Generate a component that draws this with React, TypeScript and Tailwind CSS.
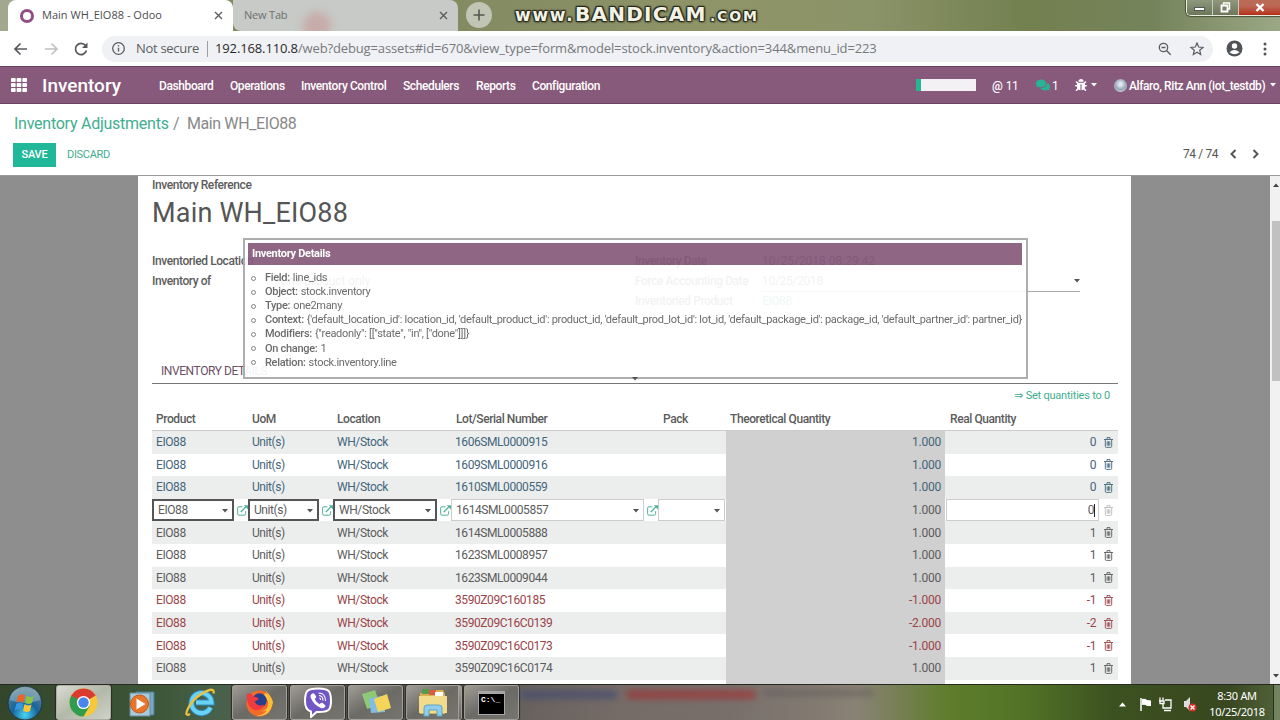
import type { ReactNode } from "react";
import clsx from "clsx";
import { FaBug, FaComments, FaTh } from "react-icons/fa";

type Line = {
  lot: string;
  theoretical: string;
  real: string;
  tone: "info" | "normal" | "danger";
  editing?: boolean;
};

const LINES: Line[] = [
  { lot: "1606SML0000915", theoretical: "1.000", real: "0", tone: "info" },
  { lot: "1609SML0000916", theoretical: "1.000", real: "0", tone: "info" },
  { lot: "1610SML0000559", theoretical: "1.000", real: "0", tone: "info" },
  { lot: "1614SML0005857", theoretical: "1.000", real: "0", tone: "normal", editing: true },
  { lot: "1614SML0005888", theoretical: "1.000", real: "1", tone: "normal" },
  { lot: "1623SML0008957", theoretical: "1.000", real: "1", tone: "normal" },
  { lot: "1623SML0009044", theoretical: "1.000", real: "1", tone: "normal" },
  { lot: "3590Z09C160185", theoretical: "-1.000", real: "-1", tone: "danger" },
  { lot: "3590Z09C16C0139", theoretical: "-2.000", real: "-2", tone: "danger" },
  { lot: "3590Z09C16C0173", theoretical: "-1.000", real: "-1", tone: "danger" },
  { lot: "3590Z09C16C0174", theoretical: "1.000", real: "1", tone: "normal" },
];

const DETAILS = [
  ["Field:", "line_ids"],
  ["Object:", "stock.inventory"],
  ["Type:", "one2many"],
  [
    "Context:",
    "{'default_location_id': location_id, 'default_product_id': product_id, 'default_prod_lot_id': lot_id, 'default_package_id': package_id, 'default_partner_id': partner_id}",
  ],
  ["Modifiers:", '{"readonly": [["state", "in", ["done"]]]}'],
  ["On change:", "1"],
  ["Relation:", "stock.inventory.line"],
];

const COLS = "grid grid-cols-[96px_85px_118px_207px_68px_219px_154px_19px]";

function Caret({ className }: { className?: string }) {
  return (
    <svg width="6" height="4" viewBox="0 0 6 4" className={clsx("shrink-0", className)} aria-hidden>
      <path d="M0 0h6L3 3.5z" fill="currentColor" />
    </svg>
  );
}

function TrashIcon({ className }: { className?: string }) {
  return (
    <svg width="9" height="11" viewBox="0 0 9 11" fill="none" stroke="currentColor" className={className} aria-hidden>
      <path d="M0 2.5h9M3 2.3V.6h3v1.7M1.3 2.7v6.6q0 1.1 1 1.1h4.4q1 0 1-1.1V2.7M3.2 4.3v4.4M4.5 4.3v4.4M5.8 4.3v4.4" strokeWidth="0.9" />
    </svg>
  );
}

function ExternalIcon() {
  return (
    <svg width="11" height="11" viewBox="0 0 11 11" fill="none" className="shrink-0 text-[#4fb497]" aria-hidden>
      <path d="M5.5 1.800H1.900Q.6 1.800.6 3.200v5.500Q.6 10.200 2 10.200h5.200q1.400 0 1.400-1.500V6.200" stroke="currentColor" />
      <path d="M3.800 7 9 1.800" stroke="currentColor" strokeWidth="1.300" />
      <path d="M6.800.2H11v4.200z" fill="currentColor" />
    </svg>
  );
}

function TabStrip() {
  return (
    <div className="relative flex h-[31px] bg-[linear-gradient(90deg,#a3a98f_0%,#7d8560_20%,#858b62_38%,#8f9568_56%,#8b9368_68%,#738050_80%,#74835a_90%,#9aa886_100%)] font-['Open_Sans',sans-serif] text-[11px] text-[#4a4d50]">
      <div className="ml-[8px] flex h-full w-[225px] items-center rounded-t-lg bg-white pl-[12px]">
        <div className="size-[14px] rounded-full border-[3px] border-[#914e84]" />
        <span className="ml-[8px] w-[172px] whitespace-nowrap tracking-[0.02px]">Main WH_EIO88 - Odoo</span>
        <CloseIcon />
      </div>
      <div className="relative flex h-full w-[225px] items-center overflow-hidden rounded-bl-lg rounded-tr-lg bg-[#c7cac7] pl-[11px] text-[#6d706d]">
        <div className="absolute left-[70px] top-[12px] size-[28px] rounded-full bg-[#c88e90] opacity-50 blur-[4px]" />
        <span className="relative w-[195px] tracking-[-0.200px]">New Tab</span>
        <CloseIcon />
      </div>
      <div className="ml-[8px] mt-[2px] flex size-[26px] items-center justify-center rounded-full bg-[#c1c5b5]">
        <svg width="12" height="12" viewBox="0 0 12 12" aria-hidden>
          <path d="M6 .5v11M.5 6h11" stroke="#54574f" strokeWidth="1.600" />
        </svg>
      </div>
      <div className="ml-[23px] flex h-[29px] items-baseline whitespace-nowrap font-['DejaVu_Sans',sans-serif] font-bold leading-[29px] text-[#f2f2e6] [text-shadow:-1px_-1px_1px_#25271a,1px_-1px_1px_#25271a,-1px_1px_1px_#25271a,1px_1px_2px_#25271a,0_0_3px_#25271a]">
        <span className="w-[60px] text-[17px] tracking-[1.700px]">www.</span>
        <span className="w-[135px] text-[20px] tracking-[1.250px]">BANDICAM</span>
        <span className="text-[14px] tracking-[1.800px]">.COM</span>
      </div>
      <div className="absolute right-0 top-0 flex h-[16px] w-[94px] overflow-hidden rounded-bl-[5px] border-b border-l border-[#e9ecdf] bg-[#7e8a6b] shadow-[0_0_1px_1px_#4a5239]">
        <div className="flex w-[26px] items-center justify-center border-r border-[#c5cbb8] bg-linear-to-b from-[#8f987d] to-[#6c775a]">
          <div className="mt-[2px] h-[4px] w-[11px] border border-[#555] bg-white" />
        </div>
        <div className="flex w-[26px] items-center justify-center border-r border-[#c5cbb8] bg-linear-to-b from-[#8f987d] to-[#6c775a]">
          <svg width="11" height="11" viewBox="0 0 11 11" fill="none" aria-hidden>
            <path d="M3.500 2.500V1h6v6H8" stroke="#fff" strokeWidth="1.400" />
            <path d="M1.500 3.500h6v6h-6z" stroke="#fff" strokeWidth="1.800" />
          </svg>
        </div>
        <div className="flex flex-1 items-center justify-center bg-linear-to-b from-[#bc6a58] from-35% to-[#b42f17]">
          <svg width="10" height="9" viewBox="0 0 10 9" aria-hidden>
            <path d="m1.500 1 7 7m0-7-7 7" stroke="#fff" strokeWidth="2.400" />
          </svg>
        </div>
      </div>
    </div>
  );
}

function CloseIcon() {
  return (
    <svg width="9" height="9" viewBox="0 0 9 9" className="relative shrink-0" aria-hidden>
      <path d="m1 1 7 7m0-7L1 8" stroke="#5a5d60" strokeWidth="1.400" />
    </svg>
  );
}

function AddressBar() {
  return (
    <div className="flex h-[35px] items-center bg-white text-[#5a5d61]">
      <svg width="88" height="16" viewBox="0 0 88 16" fill="none" className="ml-[6px] shrink-0" aria-hidden>
        <path d="M21 8H9M14.500 2.500 9 8l5.500 5.500" stroke="#55585c" strokeWidth="1.700" />
        <path d="M39 8h12M45.500 2.500 51 8l-5.500 5.500" stroke="#bcbec0" strokeWidth="1.500" />
        <path d="M79.500 4.500A5.600 5.600 0 1 0 80.500 9.500" stroke="#55585c" strokeWidth="1.700" />
        <path d="M81.500 1.500v5.500H76z" fill="#55585c" />
      </svg>
      <div className="ml-[8px] flex h-[26px] w-[1111px] items-center whitespace-nowrap rounded-full bg-[#f0f1f4] font-['Open_Sans',sans-serif] text-[13px]">
        <svg width="13" height="13" viewBox="0 0 13 13" fill="none" stroke="#5a5d61" className="ml-[10px] shrink-0" aria-hidden>
          <circle cx="6.500" cy="6.500" r="5.800" strokeWidth="1.300" />
          <path d="M6.500 5.800v3.700M6.500 3.200v1.400" strokeWidth="1.400" />
        </svg>
        <span className="ml-[11px] w-[71px] tracking-[-0.300px]">Not secure</span>
        <span className="mr-[7px] h-[16px] w-px bg-[#9b9da1]" />
        <span className="w-[920px] tracking-[-0.130px] text-[#77797d]">
          <span className="text-[#28292c]">192.168.110.8</span>
          /web?debug=assets#id=670&view_type=form&model=stock.inventory&action=344&menu_id=223
        </span>
        <svg width="50" height="14" viewBox="0 0 50 14" fill="none" stroke="#5a5d61" className="ml-[22px] shrink-0" aria-hidden>
          <circle cx="6.500" cy="5.500" r="4.200" strokeWidth="1.300" />
          <path d="m9.500 8.500 4.200 4.200M4.500 5.500h4" strokeWidth="1.400" />
          <path d="m40 1 1.700 4 4.300.4-3.300 2.800 1 4.200-3.700-2.200-3.700 2.200 1-4.200L34 5.400l4.300-.4z" strokeWidth="1.200" />
        </svg>
      </div>
      <svg width="17" height="17" viewBox="0 0 17 17" className="ml-[13px] shrink-0" aria-hidden>
        <circle cx="8.500" cy="8.500" r="8" fill="#505357" />
        <circle cx="8.500" cy="6" r="2.700" fill="#fff" />
        <path d="M3.500 12.200q5-4.400 10 0-5 4-10 0z" fill="#fff" />
      </svg>
      <svg width="4" height="14" viewBox="0 0 4 14" fill="#505357" className="ml-[20px] shrink-0" aria-hidden>
        <circle cx="2" cy="2" r="1.500" />
        <circle cx="2" cy="7" r="1.500" />
        <circle cx="2" cy="12" r="1.500" />
      </svg>
    </div>
  );
}

function NavBar() {
  return (
    <nav className="flex h-[38px] items-center whitespace-nowrap border-b border-t border-[#6a4361] bg-[#875a7b] text-[12px] font-medium tracking-[-0.400px] text-white">
      <FaTh className="ml-[11px] size-[16px] shrink-0" />
      <span className="ml-[15px] mt-[2px] w-[117px] text-[19px] tracking-normal">Inventory</span>
      <span className="mt-px w-[71px]">Dashboard</span>
      <span className="mt-px w-[71px]">Operations</span>
      <span className="mt-px w-[102px]">Inventory Control</span>
      <span className="mt-px w-[73px]">Schedulers</span>
      <span className="mt-px w-[56px]">Reports</span>
      <span className="mt-px w-[384px]">Configuration</span>
      <div className="flex h-[12px] w-[60px] bg-[#f3f1f3]">
        <div className="h-full w-[5px] bg-[#27b394]" />
      </div>
      <span className="ml-[16px] mt-px flex w-[44px] items-center gap-[3px] font-normal tracking-normal">
        <span className="text-[12px] font-medium">@</span>
        <span className="tracking-[-0.500px]">11</span>
      </span>
      <FaComments className="size-[14px] shrink-0 text-[#27b394]" />
      <span className="ml-[2px] mt-px w-[23px] font-normal">1</span>
      <FaBug className="size-[12px] shrink-0" />
      <Caret className="ml-[4px]" />
      <span className="ml-[17px] size-[13px] shrink-0 rounded-full bg-[radial-gradient(circle_at_50%_40%,#e2e6ec_15%,#94a3b5_55%,#d9e0e8_80%)]" />
      <span className="ml-[2px] mt-px w-[139px]">Alfaro, Ritz Ann (iot_testdb)</span>
      <Caret className="ml-[2px]" />
    </nav>
  );
}

function ControlPanel() {
  return (
    <header className="h-[72px] border-b border-[#999] bg-white">
      <div className="flex h-[39px] items-center whitespace-nowrap pl-[14px] text-[16px] tracking-[-0.250px] text-[#888]">
        <span className="w-[159px] text-[#3fae8f]">Inventory Adjustments</span>
        <span className="w-[14px]">/</span>
        <span className="tracking-[-0.400px]">Main WH_EIO88</span>
      </div>
      <div className="flex h-[24px] items-center text-[11px]">
        <div className="ml-[13px] flex h-[24px] w-[43px] items-center justify-center bg-[#21b799] font-medium tracking-[-0.200px] text-white">SAVE</div>
        <span className="ml-[11px] tracking-[-0.300px] text-[#3fae8f]">DISCARD</span>
        <span className="ml-auto mb-[2px] w-[46px] whitespace-nowrap text-[12px] tracking-[-0.400px] text-[#555]">74 / 74</span>
        <svg width="30" height="10" viewBox="0 0 30 10" fill="none" stroke="#555" strokeWidth="2" className="mb-[2px] mr-[21px]" aria-hidden>
          <path d="M6.500 1 2.500 5l4 4M24.500 1l4 4-4 4" />
        </svg>
      </div>
    </header>
  );
}

function Popover() {
  return (
    <div className="absolute left-[105px] top-[62px] h-[141px] w-[785px] border-2 border-[#a8a8a8] bg-white p-[3px] text-[11px] tracking-[-0.300px] text-[#606060] opacity-[0.92]">
      <div className="flex h-[22px] w-[774px] items-center bg-[#875a7b] pl-[4px] pt-px font-bold text-white">Inventory Details</div>
      <ul className="mt-[6px]">
        {DETAILS.map(([label, value]) => (
          <li key={label} className="flex h-[14.150px] items-center">
            <span className="ml-[3px] mr-[9px] size-[5px] shrink-0 rounded-full border border-[#777]" />
            <span className="mr-[3px] font-medium">{label}</span>
            <span>{value}</span>
          </li>
        ))}
      </ul>
    </div>
  );
}

function Select({ className, children }: { className: string; children?: ReactNode }) {
  return (
    <div className={clsx("flex h-[22px] items-center justify-between bg-white pl-[4px] pr-[4px] text-[#5c5c5c]", className)}>
      <span>{children}</span>
      <Caret className="mt-[2px] text-[#555]" />
    </div>
  );
}

function EditingRow({ line }: { line: Line }) {
  return (
    <div className={clsx(COLS, "h-[22.600px] items-center text-[#5c5c5c]")}>
      <div className="flex items-center gap-[3px]">
        <Select className="w-[82px] border-2 border-[#555]">EIO88</Select>
        <ExternalIcon />
      </div>
      <div className="flex items-center gap-[3px]">
        <Select className="w-[71px] border-2 border-[#555]">Unit(s)</Select>
        <ExternalIcon />
      </div>
      <div className="flex items-center gap-[3px]">
        <Select className="w-[104px] border-2 border-[#555]">WH/Stock</Select>
        <ExternalIcon />
      </div>
      <div className="flex items-center gap-[3px]">
        <Select className="w-[193px] border border-[#ccc]">{line.lot}</Select>
        <ExternalIcon />
      </div>
      <Select className="w-[67px] border border-[#ccc]" />
      <div className="flex h-full items-center justify-end bg-[#d0d0d0] pr-[4px] tracking-[-0.250px]">{line.theoretical}</div>
      <div className="ml-px flex h-[22px] items-center justify-end border border-[#ccc] pr-[3px]">
        {line.real}
        <span className="h-[13px] w-px bg-[#222]" />
      </div>
      <TrashIcon className="ml-[5px] text-[#bbb]" />
    </div>
  );
}

function Row({ line, striped }: { line: Line; striped: boolean }) {
  if (line.editing) return <EditingRow line={line} />;
  return (
    <div
      className={clsx(
        COLS,
        "h-[22.600px] items-center",
        striped ? "bg-[#eceeee]" : "bg-white",
        line.tone === "info" && "text-[#44657a]",
        line.tone === "normal" && "text-[#5c5c5c]",
        line.tone === "danger" && "text-[#9a4448]",
      )}
    >
      <span className="pl-[4px]">EIO88</span>
      <span className="pl-[4px]">Unit(s)</span>
      <span className="pl-[4px]">WH/Stock</span>
      <span className="pl-[4px]">{line.lot}</span>
      <span />
      <span className="flex h-full items-center justify-end bg-[#d0d0d0] pr-[4px] tracking-[-0.250px]">{line.theoretical}</span>
      <span className="pr-[3px] text-right">{line.real}</span>
      <TrashIcon className="ml-[5px]" />
    </div>
  );
}

function Sheet() {
  return (
    <main className="relative h-full w-[993px] shrink-0 whitespace-nowrap bg-white pl-[14px] pr-[13px] text-[12px] tracking-[-0.420px] text-[#5c5c5c]">
      <div className="h-[18px] text-[12px] font-medium leading-[19px]">Inventory Reference</div>
      <h1 className="h-[57px] text-[27px] leading-[38px] tracking-[0.200px] text-[#555]">Main WH_EIO88</h1>
      <div className="grid h-[108px] grid-cols-[483px_445px] font-medium">
        <div>
          <div className="h-[20px] leading-[20px]">Inventoried Location</div>
          <div className="grid h-[20px] grid-cols-[112px_1fr] leading-[20px]">
            <span>Inventory of</span>
            <span className="pl-[16px] font-normal tracking-normal">One product only</span>
          </div>
        </div>
        <div>
          <div className="grid h-[20px] grid-cols-[127px_1fr] leading-[20px]">
            <span>Inventory Date</span>
            <span className="font-normal tracking-normal">10/25/2018 08:29:42</span>
          </div>
          <div className="grid h-[19px] grid-cols-[126px_1fr] leading-[20px]">
            <span>Force Accounting Date</span>
            <span className="flex items-center justify-between border-b border-[#aaa] pl-px font-normal tracking-[-0.300px]">
              10/25/2018
              <Caret className="text-[#555]" />
            </span>
          </div>
          <div className="grid h-[22px] grid-cols-[127px_1fr] leading-[23px]">
            <span>Inventoried Product</span>
            <span className="font-normal text-[#3fae8f]">EIO88</span>
          </div>
        </div>
      </div>
      <div className="flex h-[25px] items-center border-b border-[#777] pl-[9px] text-[12px] text-[#6d4f66]">INVENTORY DETAILS</div>
      <div className="flex h-[23px] items-center justify-end pr-[8px] pt-[2px] text-[11px] tracking-[-0.220px] text-[#3fae8f]">⇒ Set quantities to 0</div>
      <div className={clsx(COLS, "h-[24px] items-center border-b border-[#ccc] font-medium")}>
        <span className="pl-[4px]">Product</span>
        <span className="pl-[4px]">UoM</span>
        <span className="pl-[4px]">Location</span>
        <span className="pl-[5px]">Lot/Serial Number</span>
        <span className="pl-[5px]">Pack</span>
        <span className="pl-[4px]">Theoretical Quantity</span>
        <span className="pl-[5px]">Real Quantity</span>
      </div>
      {LINES.map((line, i) => (
        <Row key={line.lot} line={line} striped={i % 2 === 0} />
      ))}
      <div className="ml-[574px] h-[6px] w-[219px] bg-[#d0d0d0]" />
      <Popover />
      <Caret className="absolute left-[494px] top-[201px] text-[#555]" />
    </main>
  );
}

function Scrollbar() {
  return (
    <div className="ml-auto flex h-full w-[10px] flex-col items-end bg-[#f1f1f1] text-[#444]">
      <Caret className="mr-px mt-[7px] rotate-180" />
      <div className="mt-[34px] h-[160px] w-[8px] bg-[#c1c1c1]" />
      <Caret className="mb-[6px] mr-px mt-auto" />
    </div>
  );
}

function TaskButton({ className, children }: { className: string; children: ReactNode }) {
  return (
    <div className={clsx("flex h-[35px] shrink-0 items-center justify-center rounded-[3px] border border-[#aaa79f]/80 bg-linear-to-br from-[#a09d96] via-[#6c6a65] to-[#77756f] shadow-[0_0_1px_1px_#2b2b26]", className)}>
      {children}
    </div>
  );
}

function Taskbar() {
  return (
    <footer className="relative flex h-[36px] items-end overflow-hidden border-t border-[#26291f] bg-[linear-gradient(90deg,#33462b_0%,#3d5636_12%,#48614b_17%,#5b5954_23%,#66605c_40%,#756b66_48%,#786f6b_57%,#837b71_64%,#8a8275_67%,#5f7d2c_74%,#527326_80%,#3c5120_87%,#38471f_96%,#53643c_100%)]">
      <div className="absolute left-[520px] top-[5px] flex gap-[8px] opacity-60 blur-[3px]">
        <div className="h-[9px] w-[98px] rounded-full bg-[#3e4773]" />
        <div className="h-[9px] w-[130px] rounded-full bg-[#a52a2d]" />
        <div className="h-[6px] w-[110px] rounded-full bg-[#5f5c5c]" />
      </div>

      <svg width="36" height="35" viewBox="0 0 36 35" className="ml-[7px] shrink-0" aria-hidden>
        <defs>
          <radialGradient id="orb" cx="50%" cy="85%" r="75%">
            <stop offset="0" stopColor="#49d3f5" />
            <stop offset="0.5" stopColor="#17649b" />
            <stop offset="1" stopColor="#5d8295" />
          </radialGradient>
        </defs>
        <circle cx="18" cy="18" r="17" fill="url(#orb)" stroke="#22343d" />
        <path d="M3 15a15 13 0 0 1 30 0q-15 6-30 0z" fill="#c0d8de" opacity=".38" />
        <path d="M11 11q4-3 7-.5l-1.500 7Q13 15.500 9.500 17.500z" fill="#ec6425" />
        <path d="M19.300 11q4 2 7.500 0l-1.800 7q-3.500 2-7-.3z" fill="#8bc440" />
        <path d="M9.300 18.800q3.500-2 7 .2l-1.600 6.300q-3.300-2-7 0z" fill="#3798db" />
        <path d="M17.500 19.300q3.500 2.200 7 .2L23 26q-3.500 2-7-.2z" fill="#fbc834" />
      </svg>

      <TaskButton className="ml-[13px] w-[55px] from-[#d9dbd3] via-[#b3b9a9] to-[#cfd2c8]">
        <svg width="29" height="29" viewBox="0 0 30 30" aria-hidden>
          <circle cx="15" cy="15" r="14.500" fill="#f8c83a" />
          <path d="M15 15 2.400 7.800A14.500 14.500 0 0 1 27.600 7.800z" fill="#d93b2f" />
          <path d="M2.400 7.800A14.500 14.500 0 0 0 15 29.500l6.300-10.800L15 15z" fill="#2f9c50" />
          <path d="M2.400 7.800 9 18.500 15 8.300h12.800z" fill="#d93b2f" />
          <path d="M2.400 7.800 8.800 18.700 15 15z" fill="#2f9c50" />
          <circle cx="15" cy="15" r="6.800" fill="#fff" />
          <circle cx="15" cy="15" r="5.400" fill="#4885ed" />
        </svg>
      </TaskButton>

      <svg width="26" height="28" viewBox="0 0 26 28" className="mb-[2px] ml-[18px] shrink-0" aria-hidden>
        <path d="M7 2h18v23H7z" fill="#76a9c3" stroke="#4c7b96" />
        <path d="M1 3h20v23H1z" fill="#a9cadb" stroke="#668ca1" />
        <circle cx="10.500" cy="14" r="9" fill="#e8762a" stroke="#c8561c" />
        <path d="M7.500 8.500v11l9-5.500z" fill="#fff" />
      </svg>

      <svg width="32" height="32" viewBox="0 0 32 32" fill="none" className="mb-[1px] ml-[30px] shrink-0" aria-hidden>
        <path d="M25.500 20.500a10 10 0 1 1 1-5H11" stroke="#2d8fc8" strokeWidth="6" />
        <path d="M25.500 20.500a10 10 0 1 1 1-5H11" stroke="#6ad2f4" strokeWidth="4" />
        <path d="M5 27Q-1 30 3 21.500T17 6.500Q30-1 28.500 6.500" stroke="#ecc13d" strokeWidth="2.300" />
      </svg>

      <TaskButton className="ml-[15px] w-[55px]">
        <svg width="29" height="29" viewBox="0 0 30 30" aria-hidden>
          <circle cx="15" cy="16" r="13.500" fill="#f36b2b" />
          <path d="M21 5q9 7 6 16-4 9-15 8 10-1 12-9T19 9z" fill="#fdc640" />
          <circle cx="15" cy="13" r="7.500" fill="#273f8d" />
          <path d="M2 6q5-1 7 3 5 0 5 3l-4 2q3 6 10 3-2 6-9 6Q1 21 2 6z" fill="#ef3b3d" />
          <path d="M18 0q7 5 6 15 0 8-7 9 10 1 12-9-1-7-11-15z" fill="#fcbf33" />
        </svg>
      </TaskButton>

      <TaskButton className="ml-[3px] w-[55px]">
        <svg width="30" height="31" viewBox="0 0 30 31" fill="none" aria-hidden>
          <path d="M15 1.500C4 1.500 2 4 2 14c0 7 2 9.500 6 10.500V30l5.500-5C26 25.500 28 23 28 14 28 4 26 1.500 15 1.500z" fill="#7057c5" stroke="#fff" strokeWidth="2" />
          <path d="M9.500 6.500q1-.8 2 .5l1.500 2.200q.6 1-.3 1.700l-1 1q1.500 3.700 5 5.300l1.200-1.100q.8-.7 1.700 0l2.400 1.800q1 .9.200 1.800-2 2.400-4.200 1.300Q10.500 18 7.700 10.500q-.8-2.400 1.800-4z" fill="#fff" />
          <path d="M15.500 6q7 0 7 8M16 8.500q4 .5 4 5M16.500 11q1 .5 1.200 2" stroke="#fff" strokeWidth="1.100" />
        </svg>
      </TaskButton>

      <TaskButton className="ml-[3px] w-[55px]">
        <svg width="30" height="27" viewBox="0 0 30 27" aria-hidden>
          <path d="m1 5 13-4 5 15-13 4z" fill="#8dca73" />
          <path d="m8 9 14-2 2 16-14 1z" fill="#82bce3" />
          <path d="m13 10 13-5 4 14-13 4z" fill="#f4d559" />
        </svg>
      </TaskButton>

      <TaskButton className="ml-[3px] w-[56px] border-r-4 border-double">
        <svg width="30" height="29" viewBox="0 0 30 29" aria-hidden>
          <path d="M2 5h6l2-3h15l2 4v20H2z" fill="#d8b052" />
          <path d="M4 1h7v5H4z" fill="#549d48" />
          <path d="M11 2h7v5h-7z" fill="#d95c40" />
          <path d="M17 4h8v5h-8z" fill="#fff" />
          <path d="M1 8h28v17H1z" fill="#f2dc8c" />
          <path d="M6 28v-8q0-3 3-3h12q3 0 3 3v8h-5v-6h-8v6z" fill="#8fcdea" stroke="#5ba5c7" />
        </svg>
      </TaskButton>

      <TaskButton className="ml-[2px] w-[55px]">
        <div className="h-[24px] w-[27px] border border-t-[3px] border-[#a6a6a6] bg-black pl-[2px] font-['Liberation_Mono',monospace] text-[8px] font-bold leading-[12px] text-white">
          C:\_
        </div>
      </TaskButton>

      <div className="ml-auto flex h-full items-center font-['Noto_Sans',sans-serif] text-[11px] leading-[16px] text-white">
        <svg width="80" height="18" viewBox="0 0 80 18" fill="none" className="mr-[10px] mt-[3px]" aria-hidden>
          <path d="M0 11.500 3.500 7.500l3.500 4z" fill="#fff" />
          <path d="M22 3v13" stroke="#fff" strokeWidth="1.500" />
          <path d="M23 4q3-1 5 1l4 .5V11h-4q-2-2-5-1z" fill="#fff" />
          <path d="M46 5h6v8h-8V9M45 15.500h7M41 2.500v3M44 2.500v3M40 6h5v2.500h-4V6" stroke="#fff" strokeWidth="1.300" />
          <path d="M65 6h2l4-4v14l-4-4h-2z" fill="#ddd" />
          <circle cx="73.500" cy="12.500" r="4" fill="#d52f2c" />
          <path d="m71.500 10.500 4 4m0-4-4 4" stroke="#fff" strokeWidth="1.300" />
        </svg>
        <div className="mt-[2px] w-[56px] whitespace-nowrap text-center tracking-[-0.300px]">
          8:30 AM
          <br />
          10/25/2018
        </div>
        <div className="ml-[8px] h-full w-[7px] border-l border-[#27301f] bg-[#8b9779]/60" />
      </div>
    </footer>
  );
}

export default function App() {
  return (
    <div className="flex h-[720px] w-[1280px] flex-col overflow-hidden bg-white font-['Roboto',sans-serif]">
      <TabStrip />
      <AddressBar />
      <NavBar />
      <ControlPanel />
      <div className="flex h-[508px] shrink-0 overflow-hidden bg-[#8e8e8e]">
        <div className="w-[138px] shrink-0" />
        <Sheet />
        <Scrollbar />
      </div>
      <Taskbar />
    </div>
  );
}
